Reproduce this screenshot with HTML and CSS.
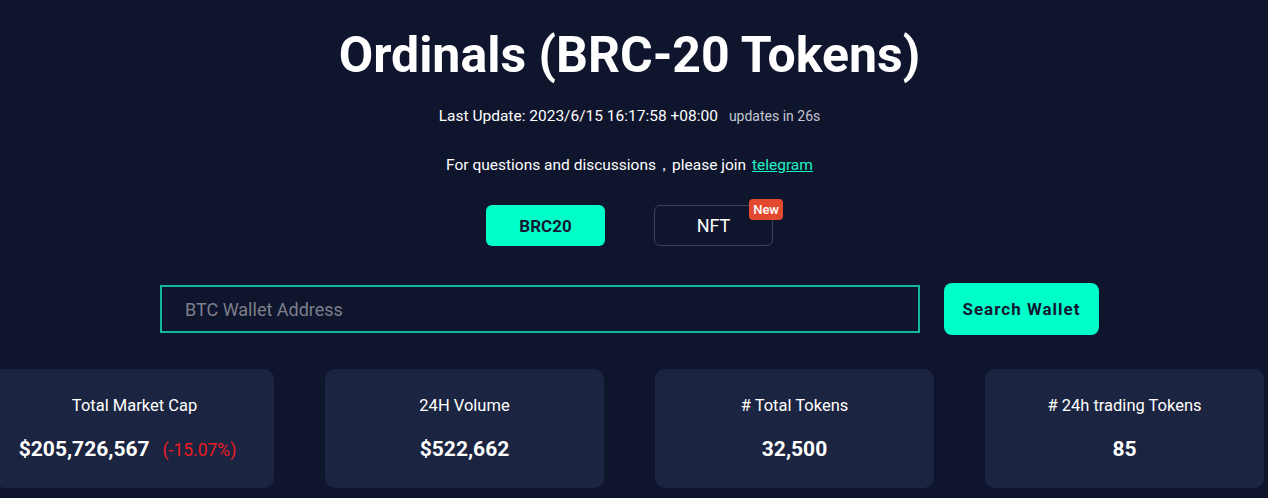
FILE: index.html
```html
<!DOCTYPE html>
<html lang="en">
<head>
<meta charset="utf-8">
<title>Ordinals (BRC-20 Tokens)</title>
<link rel="stylesheet" href="styles.css">
</head>
<body>
<div class="page">
  <h1 class="title">Ordinals (BRC-20 Tokens)</h1>
  <div class="update">
    <span class="update-main">Last Update: 2023/6/15 16:17:58 +08:00</span>
    <span class="update-sub">updates in 26s</span>
  </div>
  <div class="join">For questions and discussions，please join <a class="tg" href="#">telegram</a></div>
  <div class="tabs">
    <button class="tab tab-active">BRC20</button>
    <button class="tab tab-outline">NFT<span class="badge">New</span></button>
  </div>
  <div class="search">
    <input class="search-input" type="text" placeholder="BTC Wallet Address">
    <button class="search-btn">Search Wallet</button>
  </div>
  <div class="cards">
    <div class="card">
      <div class="card-label">Total Market Cap</div>
      <div class="card-value">$205,726,567<span class="neg">(-15.07%)</span></div>
    </div>
    <div class="card">
      <div class="card-label">24H Volume</div>
      <div class="card-value">$522,662</div>
    </div>
    <div class="card">
      <div class="card-label"># Total Tokens</div>
      <div class="card-value">32,500</div>
    </div>
    <div class="card">
      <div class="card-label"># 24h trading Tokens</div>
      <div class="card-value">85</div>
    </div>
  </div>
</div>
</body>
</html>
```

FILE: styles.css
```css
* { box-sizing: border-box; }
html, body {
  margin: 0;
  padding: 0;
  background: #10152e;
  font-family: Roboto, "Liberation Sans", Arial, sans-serif;
  color: #ffffff;
  overflow: hidden;
}
.page {
  width: 1259px;
  display: flex;
  flex-direction: column;
  align-items: center;
}
.title {
  margin: 25px 0 0;
  font-size: 50px;
  font-weight: 700;
  line-height: 60px;
}
.update {
  margin-top: 21px;
  display: flex;
  align-items: baseline;
  gap: 11px;
  line-height: 20px;
}
.update-main { font-size: 15.5px; }
.update-sub { font-size: 14px; color: #c3c6d0; }
.join {
  margin-top: 29px;
  font-size: 15.5px;
  line-height: 20px;
}
.tg {
  color: #1ef2c2;
  text-decoration: underline;
  margin-left: 2px;
}
.tabs {
  margin-top: 30px;
  display: flex;
  gap: 49px;
}
.tab {
  position: relative;
  width: 119px;
  height: 41px;
  border-radius: 6px;
  font-family: inherit;
  font-size: 17px;
  padding: 0;
}
.tab-active {
  background: #00ffc8;
  border: none;
  color: #121833;
  font-weight: 700;
}
.tab-outline {
  background: transparent;
  border: 1px solid #3c4258;
  color: #ffffff;
  font-size: 18px;
  font-weight: 400;
}
.badge {
  position: absolute;
  top: -7px;
  right: -11px;
  background: #e2492f;
  color: #fff;
  font-size: 13px;
  font-weight: 500;
  line-height: 21px;
  padding: 0 4px;
  border-radius: 4px;
}
.search {
  margin-top: 37px;
  display: flex;
  align-items: center;
  gap: 24px;
}
.search-input {
  width: 760px;
  height: 48px;
  background: transparent;
  border: 2px solid #13b89b;
  padding: 0 23px;
  font-family: inherit;
  font-size: 18px;
  color: #fff;
  outline: none;
}
.search-input::placeholder { color: #7b7f8a; }
.search-btn {
  width: 155px;
  height: 52px;
  background: #00ffc8;
  border: none;
  border-radius: 8px;
  color: #121833;
  font-family: inherit;
  font-size: 17px;
  font-weight: 700;
  letter-spacing: 1px;
  padding: 0;
}
.cards {
  margin-top: 34px;
  width: 100%;
  display: flex;
  justify-content: center;
  gap: 51px;
}
.card {
  flex: 0 0 279px;
  height: 119px;
  background: #1b2440;
  border-radius: 10px;
  display: flex;
  flex-direction: column;
  align-items: center;
  padding-top: 27px;
}
.card-label {
  font-size: 16.5px;
  line-height: 20px;
}
.card-value {
  margin-top: 20px;
  font-size: 21px;
  font-weight: 700;
  line-height: 26px;
  display: flex;
  align-items: baseline;
}
.neg {
  color: #ec1c24;
  font-size: 17.5px;
  font-weight: 400;
  margin-left: 13px;
  margin-right: 14px;
}
```
